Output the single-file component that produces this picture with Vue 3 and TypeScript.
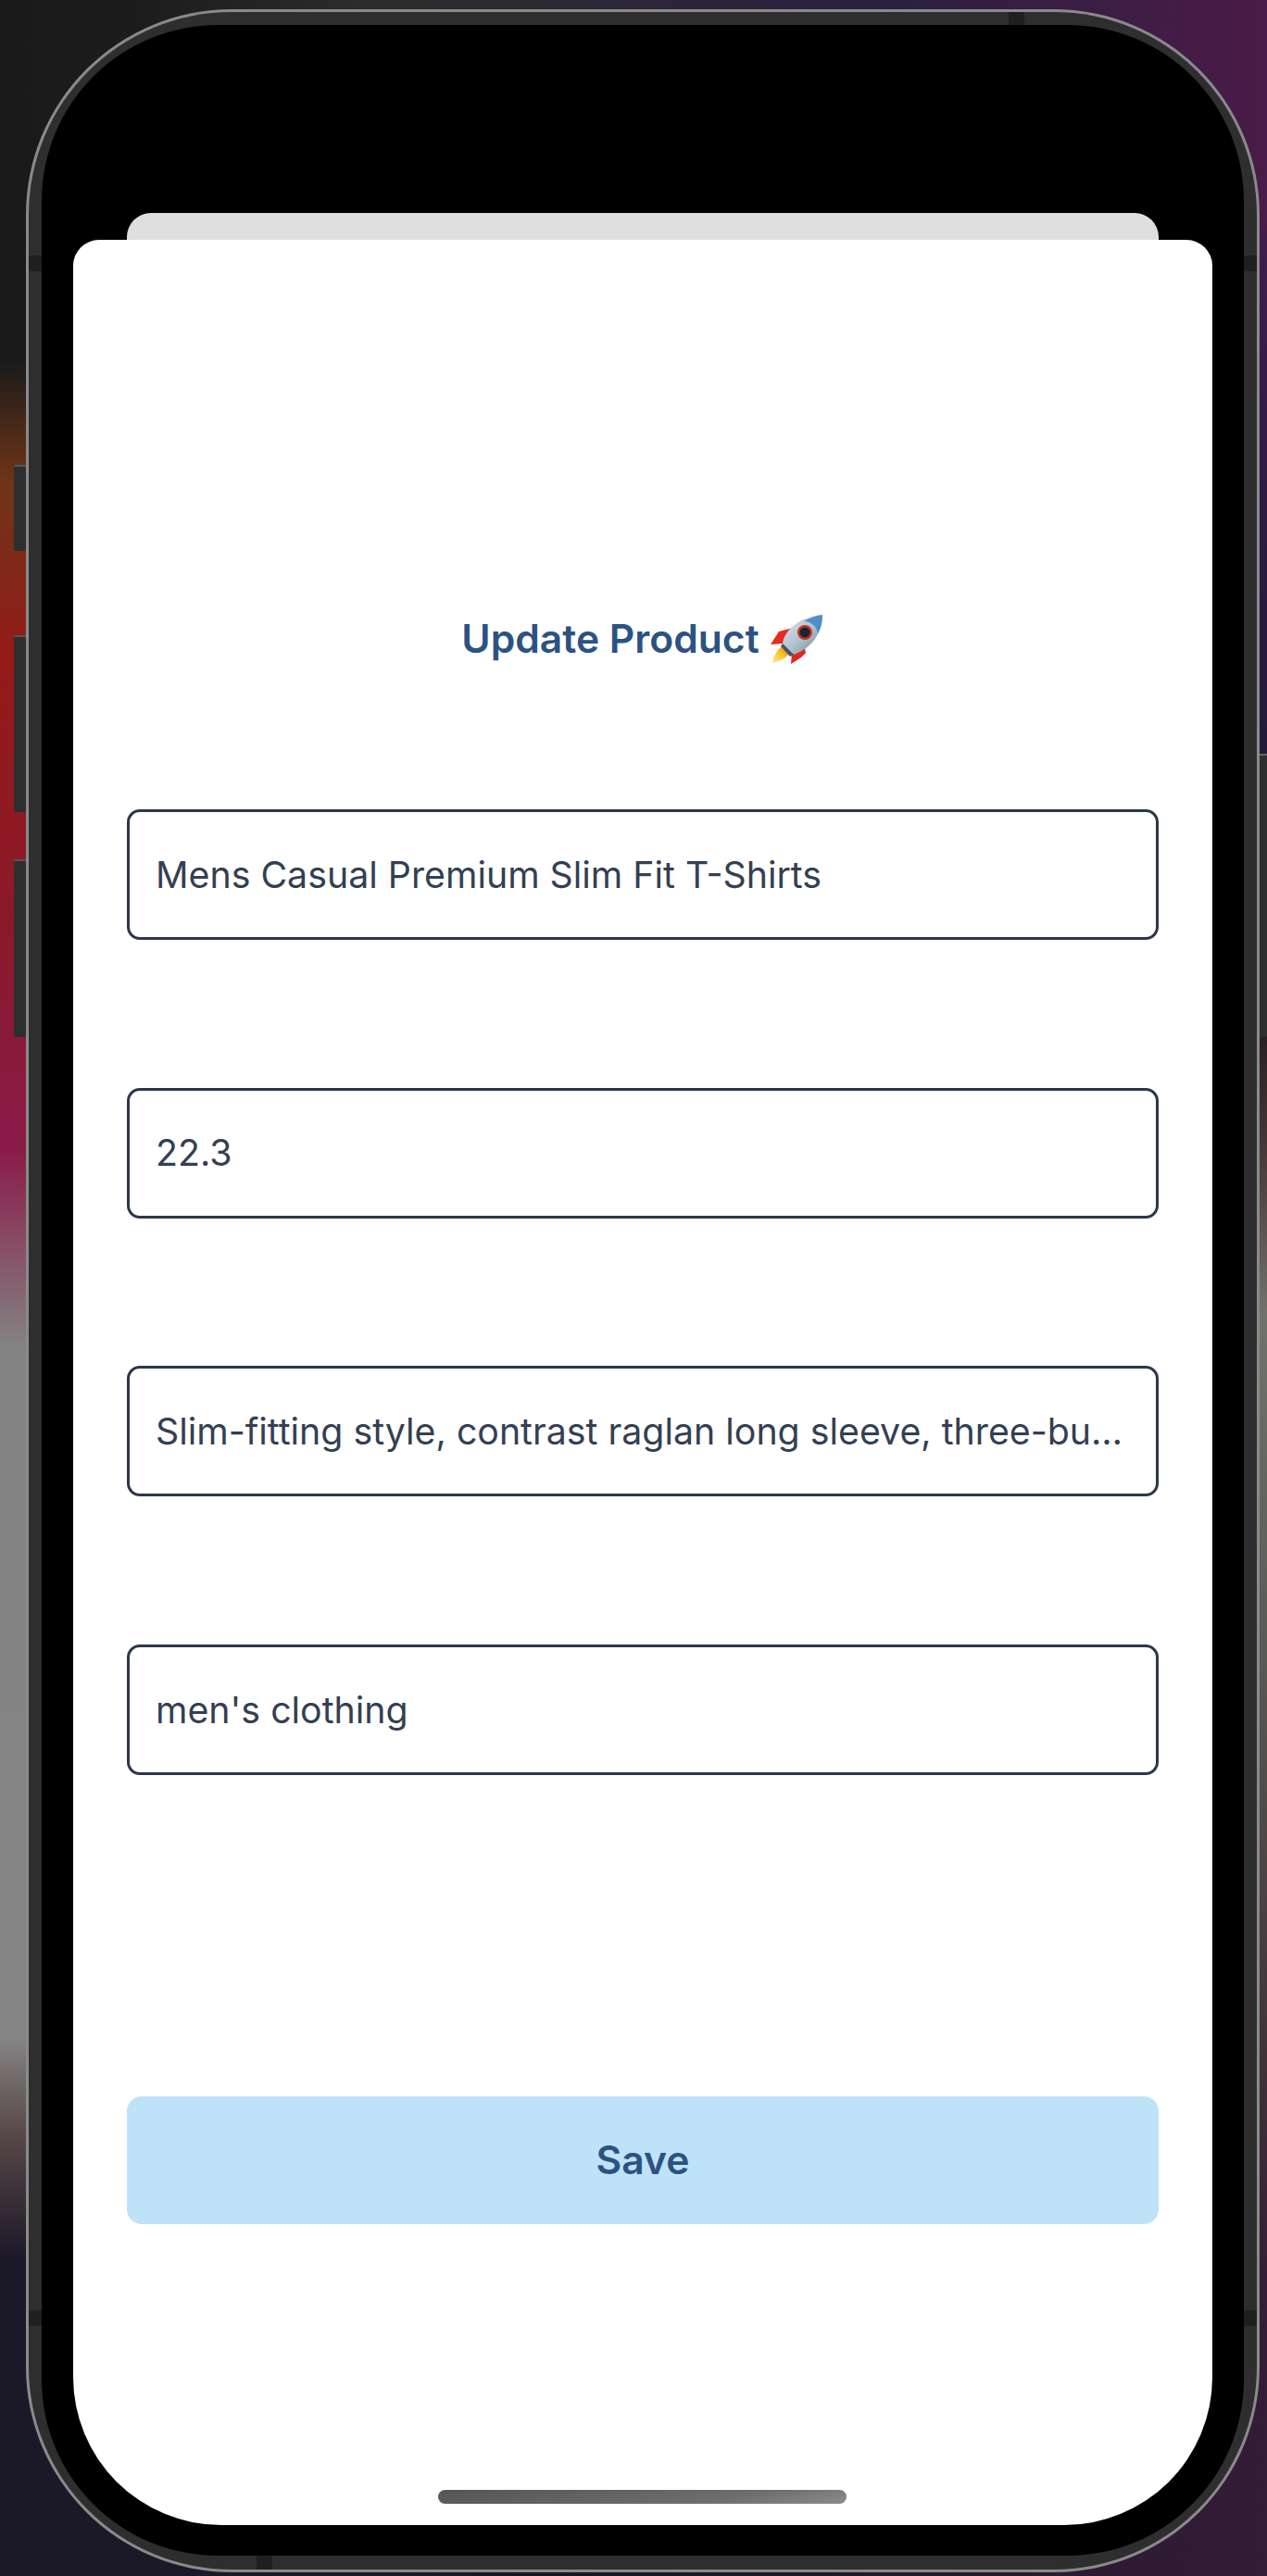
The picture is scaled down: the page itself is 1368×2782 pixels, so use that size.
<script setup lang="ts">
interface Field { id: string; value: string }
const fields: Field[] = [
  { id: 'title', value: 'Mens Casual Premium Slim Fit T-Shirts' },
  { id: 'price', value: '22.3' },
  { id: 'description', value: 'Slim-fitting style, contrast raglan long sleeve, three-button henley placket, light weight & soft fabric for breathable and comfortable wearing.' },
  { id: 'category', value: "men's clothing" },
]
</script>

<template>
  <main class="backdrop">
    <i class="side side-a"></i>
    <i class="side side-b"></i>
    <i class="side side-c"></i>
    <i class="side-right"></i>
    <div class="device">
      <i class="band band-l1"></i>
      <i class="band band-r1"></i>
      <i class="band band-l2"></i>
      <i class="band band-r2"></i>
      <i class="band band-t"></i>
      <i class="band band-b"></i>
      <div class="screen">
        <div class="behind"></div>
        <section class="sheet">
          <h1 class="title">
            <span>Update Product</span>
            <svg class="rocket" viewBox="0 0 58 54" aria-hidden="true">
              <defs>
                <linearGradient id="hull" x1="0" y1="0" x2="1" y2="1">
                  <stop offset="0" stop-color="#e2ebf1" />
                  <stop offset="0.55" stop-color="#aebfcd" />
                  <stop offset="1" stop-color="#687d92" />
                </linearGradient>
                <linearGradient id="flame" x1="1" y1="0" x2="0" y2="1">
                  <stop offset="0" stop-color="#f0581c" />
                  <stop offset="0.5" stop-color="#fbbf1f" />
                  <stop offset="1" stop-color="#fdeaa0" />
                </linearGradient>
              </defs>
              <path d="M24 15 L9 19 L0 33 L13 32 L18 35 Z" fill="#ea2a1c" />
              <path d="M36 32 L38 42 L33 47 L22 54 L23 42 L19 38 Z" fill="#e2261b" />
              <path d="M15 33 C8 37 3 45 2 53 C10 51 19 47 23 39 Z" fill="url(#flame)" />
              <path d="M13 32 C15 18 30 3 56 1 C55 24 42 38 25 44 Z" fill="url(#hull)" />
              <path d="M56 1 C48 2 42 5 36 8 C44 8 50 14 51 21 C55 15 56 8 56 1 Z" fill="#4f8ec9" />
              <path d="M13 32 L25 44 L21 46 L11 35 Z" fill="#41566b" />
              <circle cx="37" cy="20" r="8" fill="#c8331f" />
              <circle cx="37" cy="20" r="5.6" fill="#1c2430" />
            </svg>
          </h1>
          <div class="fields">
            <div v-for="field in fields" :key="field.id" class="field">
              <span class="field-text">{{ field.value }}</span>
            </div>
          </div>
          <button class="save" type="button">Save</button>
          <i class="home"></i>
        </section>
      </div>
    </div>
  </main>
</template>

<style>
html, body { margin: 0; padding: 0; background: #1a1a1a; }
</style>

<style scoped>
* { box-sizing: border-box; }
i { display: block; }
.backdrop {
  position: relative;
  width: 1368px;
  height: 2782px;
  overflow: hidden;
  padding: 10px 8px 4px 28px;
  background:
    linear-gradient(90deg, #1a1a1a 0, #1c1c1c 150px, #2c2c2c 400px, #2b2040 968px, #4a1b48 1368px) 0 0 / 100% 250px no-repeat,
    linear-gradient(90deg, #1b1828 0, #1b1828 400px, #1b1626 700px, #331c36 1368px) 0 100% / 100% 300px no-repeat,
    linear-gradient(180deg, #1a1a1a 0, #1a1a1a 390px, #6e3518 520px, #951a18 710px, #8a1a2a 1000px, #8a1a48 1240px, #838383 1455px, #858585 2200px, #5a4a4a 2300px, #1b1828 2440px, #1b1828 2782px) 0 0 / 684px 100% no-repeat,
    linear-gradient(180deg, #3f1c4c 250px, #251a3c 710px, #1e1a30 1118px, #2a2024 1122px, #4a3a3a 1250px, #72726c 1420px, #585854 1800px, #3e3036 2250px, #331c36 2482px, #331c36 2782px) 684px 0 / 684px 100% no-repeat;
}
.side {
  position: absolute;
  left: 15px;
  width: 14px;
  background: #2e2e2e;
  border-top: 2px solid #555;
  border-radius: 2px 0 0 2px;
}
.side-a { top: 502px; height: 93px; }
.side-b { top: 686px; height: 191px; }
.side-c { top: 928px; height: 192px; }
.side-right {
  position: absolute;
  left: 1360px;
  top: 814px;
  width: 8px;
  height: 306px;
  background: #2e2e2e;
  border-top: 2px solid #666;
}
.device {
  position: relative;
  width: 1332px;
  height: 2768px;
  padding: 3px;
  border-radius: 222px;
  background: #8a8a8a;
}
.device::before {
  content: "";
  position: absolute;
  inset: 3px;
  border-radius: 219px;
  background: #2e2e2e;
}
.band {
  position: absolute;
  z-index: 1;
  background: #1f1f1f;
}
.band-l1 { left: 3px; top: 266px; width: 14px; height: 17px; }
.band-r1 { right: 3px; top: 266px; width: 14px; height: 17px; }
.band-l2 { left: 3px; top: 2485px; width: 14px; height: 17px; }
.band-r2 { right: 3px; top: 2485px; width: 14px; height: 17px; }
.band-t { left: 1061px; top: 3px; width: 17px; height: 14px; }
.band-b { left: 249px; bottom: 3px; width: 17px; height: 15px; }
.screen {
  position: absolute;
  z-index: 2;
  left: 17px;
  right: 17px;
  top: 17px;
  bottom: 18px;
  padding: 203px 34px 33px;
  border-radius: 190px;
  background: #000;
}
.behind {
  height: 29px;
  margin: 0 58px;
  border-radius: 26px 26px 0 0;
  background: #dfdfdf;
}
.sheet {
  position: relative;
  display: flex;
  flex-direction: column;
  height: 2468px;
  padding: 0 58px;
  background: #fff;
  border-radius: 28px 28px 160px 160px;
}
.title {
  display: flex;
  align-items: center;
  justify-content: center;
  gap: 12px;
  height: 60px;
  margin: 401px 0 0;
  color: #2c5282;
  font: 600 42.6px/60px Inter, "Liberation Sans", sans-serif;
}
.rocket { width: 58px; height: 54px; flex: none; }
.fields {
  display: flex;
  flex-direction: column;
  gap: 159.7px;
  margin-top: 154px;
}
.field {
  display: flex;
  align-items: center;
  height: 141px;
  padding: 0 28px;
  border: 3px solid #2d3748;
  border-radius: 14px;
  background: #fff;
}
.field-text {
  display: block;
  min-width: 0;
  overflow: hidden;
  white-space: nowrap;
  text-overflow: ellipsis;
  color: #343f52;
  font: 400 39.3px/56px Inter, "Liberation Sans", sans-serif;
}
.save {
  display: block;
  height: 138px;
  margin-top: 346.7px;
  border: 0;
  border-radius: 16px;
  background: #bee3f8;
  color: #2c5282;
  font: 600 42.6px/60px Inter, "Liberation Sans", sans-serif;
}
.home {
  position: absolute;
  left: 394px;
  bottom: 23px;
  width: 441px;
  height: 15px;
  border-radius: 8px;
  background: linear-gradient(170deg, #555, #6e6e6e 70%, #8d8d8d);
}
</style>
